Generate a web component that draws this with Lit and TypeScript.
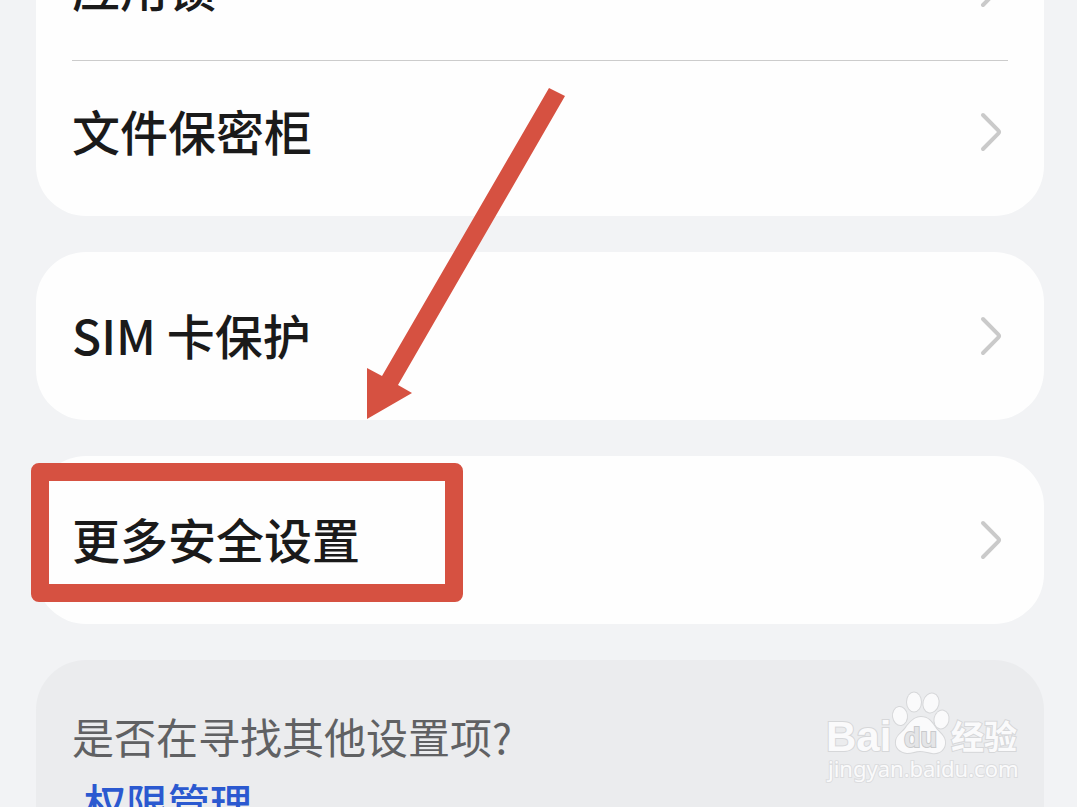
import { LitElement, html, css } from "lit";
import { customElement, property } from "lit/decorators.js";

@customElement("setting-row")
class SettingRow extends LitElement {
  @property() label = "";

  static styles = css`
    :host {
      display: block;
    }
    .row {
      display: flex;
      align-items: center;
      justify-content: space-between;
      height: 144px;
      color: #1a1a1a;
      font-size: 48px;
      font-weight: 500;
      line-height: 72px;
      text-decoration: none;
    }
    .label {
      padding-bottom: 4px;
    }
    .chevron {
      flex: none;
      width: 36px;
      height: 48px;
    }
  `;

  render() {
    return html`<a class="row" href="#">
      <span class="label">${this.label}</span>
      <svg class="chevron" viewBox="0 0 36 48" fill="none" stroke="#cacaca" stroke-width="4" stroke-linecap="round" stroke-linejoin="round" aria-hidden="true">
        <path d="M11 7L26.2 22.4Q27.8 24 26.2 25.6L11 41" />
      </svg>
    </a>`;
  }
}

@customElement("brand-mark")
class BrandMark extends LitElement {
  static styles = css`
    :host {
      display: block;
    }
    svg {
      display: block;
      width: 200px;
      height: 100px;
    }
    .mark {
      fill: #fafafb;
      stroke: #d6d7d9;
      stroke-width: 2px;
      paint-order: stroke;
    }
    .latin {
      font: 700 42px "Liberation Sans", sans-serif;
    }
    .inner {
      font: 700 27px "Liberation Sans", sans-serif;
      fill: #e4e5e7;
      stroke: #c9cacc;
    }
    .han {
      font: 700 33px "Noto Sans CJK SC", sans-serif;
    }
    .site {
      font: 400 22px "Noto Sans", sans-serif;
      stroke: #dcdddf;
    }
  `;

  render() {
    return html`<svg viewBox="0 0 200 100" role="img" aria-label="Baidu 经验">
      <text class="mark latin" x="3" y="61">Bai</text>
      <g class="mark">
        <ellipse cx="77" cy="26" rx="7" ry="9" transform="rotate(-8 77 26)" />
        <ellipse cx="91" cy="12" rx="7" ry="9.5" />
        <ellipse cx="108" cy="13" rx="7.5" ry="9.5" transform="rotate(14 108 13)" />
        <ellipse cx="118.5" cy="29.5" rx="7" ry="9" transform="rotate(12 118.5 29.5)" />
        <path d="M98 27C105 27 108 31 112 37C116 43 123 46 122 54C121 61 115 64 109 63C104 62 101 61 97 61C93 61 89 63 84 63C77 62 72 58 73 51C74 44 81 42 84 36C88 31 92 27 98 27Z" />
      </g>
      <text class="mark inner" x="81" y="57">du</text>
      <text class="mark han" x="128" y="59">经验</text>
      <text class="mark site" x="5" y="87">jingyan.baidu.com</text>
    </svg>`;
  }
}

@customElement("app-root")
class AppRoot extends LitElement {
  static styles = css`
    :host {
      display: block;
      position: relative;
      height: 100vh;
      overflow: hidden;
      background: #f2f3f5;
      font-family: "Noto Sans CJK SC", sans-serif;
    }
    .list {
      display: flex;
      flex-direction: column;
      gap: 36px;
      margin-top: -96px;
      padding: 0 33px 0 36px;
    }
    .card {
      position: relative;
      padding: 12px 36px;
      border-radius: 50px;
      background: #fefefe;
    }
    .divided {
      box-shadow: 0 1px #cccccc;
    }
    .more {
      display: flex;
      flex-direction: column;
      align-items: flex-start;
      gap: 4px;
      padding: 45px 36px;
      background: #ebecee;
      font-size: 42px;
      line-height: 62px;
    }
    .question {
      margin: 0;
      color: #606163;
    }
    .link {
      padding: 0 12px;
      color: #2b59d0;
      font-weight: 500;
      text-decoration: none;
    }
    .highlight {
      position: absolute;
      top: 7px;
      left: -5px;
      width: 396px;
      height: 103px;
      border: 18px solid #d65141;
      border-radius: 8px;
      pointer-events: none;
    }
    .arrow {
      position: absolute;
      top: 88px;
      left: 367px;
      width: 198px;
      height: 331px;
      fill: #d65141;
      pointer-events: none;
    }
    .brand {
      position: absolute;
      right: 54px;
      bottom: 17px;
    }
  `;

  render() {
    return html`
      <main class="list">
        <section class="card">
          <setting-row class="divided" label="应用锁"></setting-row>
          <setting-row label="文件保密柜"></setting-row>
        </section>
        <section class="card">
          <setting-row label="SIM 卡保护"></setting-row>
        </section>
        <section class="card">
          <setting-row label="更多安全设置"></setting-row>
          <div class="highlight"></div>
        </section>
        <section class="card more">
          <p class="question">是否在寻找其他设置项?</p>
          <a class="link" href="#">权限管理</a>
        </section>
      </main>
      <svg class="arrow" viewBox="0 0 198 331" aria-hidden="true">
        <path d="M182 0L198 8L31 297L45 305L0 331V280L15 288Z" />
      </svg>
      <brand-mark class="brand"></brand-mark>
    `;
  }
}
